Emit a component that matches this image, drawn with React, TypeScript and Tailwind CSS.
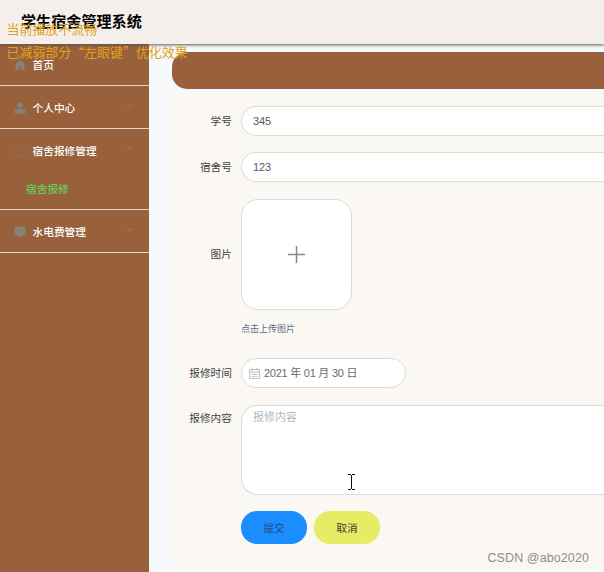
import type { ReactNode } from 'react';

const uiFont = "font-['Liberation_Sans','Noto_Sans_CJK_SC',sans-serif]";

function HomeIcon() {
  return (
    <svg viewBox="0 0 12 12" className="w-3 h-3" fill="currentColor">
      <path d="M6 .8 .3 6.1h1.4v4.6c0 .4.2.6.6.6h2.3V7.4h2.8v3.9h2.3c.4 0 .6-.2.6-.6V6.1h1.4z" />
    </svg>
  );
}

function UserIcon() {
  return (
    <svg viewBox="0 0 12 12" className="w-3 h-3" fill="currentColor">
      <circle cx="6" cy="3.4" r="2.9" />
      <path d="M.6 11.4V9.6C.6 7.8 2.2 7 4 7h4c1.8 0 3.4.8 3.4 2.6v1.8z" />
    </svg>
  );
}

function PowerIcon() {
  return (
    <svg viewBox="0 0 12 12" className="w-3 h-3" fill="none" stroke="currentColor" strokeWidth="0.9" strokeLinecap="round">
      <path d="M3.2 2a5.1 5.1 0 1 0 5.6 0M6 .5v5.2" />
    </svg>
  );
}

function ChatIcon() {
  return (
    <svg viewBox="0 0 12 12" className="w-3 h-3">
      <path d="M1.2.8h9.6c.4 0 .7.3.7.7v7.2c0 .4-.3.7-.7.7H8L6 11.4 4 9.4H1.2c-.4 0-.7-.3-.7-.7V1.5c0-.4.3-.7.7-.7z" fill="currentColor" />
      <g fill="#98603b">
        <circle cx="3.5" cy="5" r=".55" />
        <circle cx="6" cy="5" r=".55" />
        <circle cx="8.5" cy="5" r=".55" />
      </g>
    </svg>
  );
}

function Chevron({ open }: { open: boolean }) {
  return (
    <svg viewBox="0 0 8 5" className="w-2 h-[5px] mb-[5px]" fill="none" stroke="#a67c66" strokeWidth="0.9">
      <path d={open ? 'M.5 4.3 4 .8l3.5 3.5' : 'M.5.7 4 4.2 7.5.7'} />
    </svg>
  );
}

function CalendarIcon() {
  return (
    <svg viewBox="0 0 11 11" className="w-[11px] h-[11px] shrink-0" fill="none" stroke="#b4bac4" strokeWidth="0.9">
      <path d="M.5 1.6h10v8.9H.5zM.5 4.1h10M3 0v2.6M8 0v2.6M2.4 6.3h6.2M2.4 8.4h6.2" />
    </svg>
  );
}

interface MenuItem {
  label: string;
  icon: ReactNode;
  iconClass: string;
  expandable?: boolean;
  children?: string[];
}

const menu: MenuItem[] = [
  { label: '首页', icon: <HomeIcon />, iconClass: 'text-[#85827d]' },
  { label: '个人中心', icon: <UserIcon />, iconClass: 'text-[#85827d]', expandable: true },
  { label: '宿舍报修管理', icon: <PowerIcon />, iconClass: 'text-[#8d7463]', expandable: true, children: ['宿舍报修'] },
  { label: '水电费管理', icon: <ChatIcon />, iconClass: 'text-[#85827d]', expandable: true },
];

function Sidebar() {
  return (
    <nav className="w-[149px] shrink-0 bg-[#98603b]">
      {menu.map((item, i) => (
        <div key={item.label} className="border-b border-[#e6d3c6]">
          <div className={`flex items-center pl-3.5 pr-[15px] pt-px ${i === 0 ? 'h-[41px]' : 'h-[42px]'}`}>
            <span className={item.iconClass}>{item.icon}</span>
            <span className="ml-[6.5px] pt-px flex-1 text-[10.7px] font-medium text-white whitespace-nowrap">{item.label}</span>
            {item.expandable && <Chevron open={!!item.children} />}
          </div>
          {item.children?.map((child) => (
            <div key={child} className="h-[38px] pl-[26px] pb-0.5 flex items-center text-[10.7px] font-medium text-[#63d054]">
              {child}
            </div>
          ))}
        </div>
      ))}
    </nav>
  );
}

function Field({ label, labelClass = 'items-center', children }: { label: string; labelClass?: string; children: ReactNode }) {
  return (
    <div className="flex">
      <div className={`w-[60px] mr-[9px] shrink-0 flex justify-end text-[10.7px] text-[#404245] whitespace-nowrap ${labelClass}`}>
        {label}
      </div>
      {children}
    </div>
  );
}

const inputClass = 'h-[30px] flex-1 rounded-l-[15px] border border-r-0 border-[#d8dce0] bg-white pl-[11px] text-[11px] tracking-[-0.1px] text-[#55585e] outline-none min-w-0';

export default function App() {
  return (
    <div className={`relative w-[604px] h-[572px] overflow-hidden flex flex-col bg-[#f6f9fb] ${uiFont}`}>
      <header className="relative z-10 h-11 shrink-0 flex items-center pl-[21px] bg-[#f4efeb] shadow-[0_1px_3px_#555]">
        <h1 className="text-[15.1px] font-bold text-black">学生宿舍管理系统</h1>
      </header>

      <div className="flex flex-1 min-h-0">
        <Sidebar />

        <main className="ml-[23px] flex-1 min-w-0 pt-2">
          <div className="h-[37px] rounded-l-[15px] bg-[#98603b]" />

          <form className="mt-[5px] h-[474px] pt-3 flex flex-col bg-[#fbf8f4]">
            <Field label="学号">
              <input className={inputClass} defaultValue="345" />
            </Field>
            <div className="mt-4">
              <Field label="宿舍号">
                <input className={inputClass} defaultValue="123" />
              </Field>
            </div>

            <div className="mt-[17px]">
              <Field label="图片">
                <button type="button" className="w-[111px] h-[111px] pr-px pb-px rounded-[17px] border border-[#d8dce0] bg-white flex items-center justify-center">
                  <svg viewBox="0 0 17 17" className="w-[17px] h-[17px]" stroke="#85888c" strokeWidth="1.5">
                    <path d="M8.5 0v17M0 8.5h17" />
                  </svg>
                </button>
              </Field>
            </div>
            <div className="ml-[69px] mt-3 h-[14px] text-[9px] leading-[14px] text-[#5c6c84]">点击上传图片</div>

            <div className="mt-[22px]">
              <Field label="报修时间">
                <div className="w-[165px] h-[30px] rounded-full border border-[#d8dce0] bg-white flex items-center pl-[7px] gap-1">
                  <CalendarIcon />
                  <span className="text-[11px] tracking-[-0.25px] text-[#75695f] whitespace-nowrap">2021 年 01 月 30 日</span>
                </div>
              </Field>
            </div>

            <div className="mt-[17px]">
              <Field label="报修内容" labelClass="items-start pt-[5px]">
                <textarea
                  placeholder="报修内容"
                  className="h-[90px] flex-1 min-w-0 resize-none rounded-l-[16px] border border-r-0 border-[#d8dce0] bg-white pl-[11px] pt-[3px] text-[11px] leading-4 outline-none placeholder:text-[#b0bbbe]"
                />
              </Field>
            </div>

            <div className="ml-[69px] mt-4 flex gap-[7px] text-[10.7px]">
              <button type="button" className="w-[66px] h-[33px] pt-px rounded-[16px] bg-[#1b8eff] text-[#284a78]">提交</button>
              <button type="button" className="w-[66px] h-[33px] pt-px rounded-[16px] bg-[#e7ec64] text-[#404233]">取消</button>
            </div>
          </form>
        </main>
      </div>

      {/* player notice */}
      <div className="absolute z-20 left-[6.5px] top-[17px] font-['Noto_Sans_CJK_SC',sans-serif] text-[12.95px] leading-[23px] text-[#e3a21c] whitespace-nowrap">
        <p>当前播放不流畅</p>
        <p>已减弱部分“左眼键”优化效果</p>
      </div>

      {/* text cursor */}
      <svg viewBox="0 0 7 16" className="absolute z-20 left-[348px] top-[474px] w-[7px] h-4" fill="none" stroke="#111" shapeRendering="crispEdges">
        <path d="M0 .5h3M4 .5h3M3.5 1v14M0 15.5h3M4 15.5h3" />
      </svg>

      <div className="absolute z-20 right-[15px] bottom-[6px] font-['Liberation_Sans',sans-serif] text-[12.5px] leading-4 tracking-[0.1px] text-[#8f8d8a]">
        CSDN @abo2020
      </div>
    </div>
  );
}
